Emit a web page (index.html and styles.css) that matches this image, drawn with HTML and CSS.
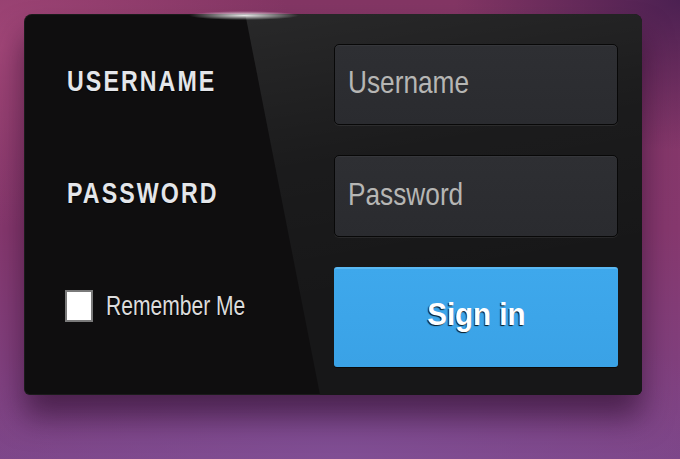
FILE: index.html
```html
<!DOCTYPE html>
<html>
<head>
<meta charset="utf-8">
<link rel="stylesheet" href="styles.css">
</head>
<body>
<div class="scene">
  <form class="panel">
    <label class="label"><span class="squeeze">USERNAME</span></label>
    <div class="field"><span class="ph squeeze">Username</span></div>
    <label class="label"><span class="squeeze">PASSWORD</span></label>
    <div class="field"><span class="ph squeeze">Password</span></div>
    <label class="remember"><span class="box"></span><span class="remember-text squeeze">Remember Me</span></label>
    <button class="signin" type="button"><span class="signin-text">Sign in</span></button>
  </form>
</div>
</body>
</html>
```

FILE: styles.css
```css
html, body {
  margin: 0;
  padding: 0;
}
body {
  width: 680px;
  height: 459px;
  overflow: hidden;
  font-family: "Liberation Sans", Arial, sans-serif;
}
.scene {
  width: 680px;
  height: 459px;
  padding: 14px 0 0 24px;
  box-sizing: border-box;
  background:
    radial-gradient(ellipse 420px 260px at 0% 10%, rgba(165, 72, 122, 0.85), rgba(165, 72, 122, 0) 70%),
    radial-gradient(ellipse 300px 200px at 100% 0%, rgba(70, 30, 80, 0.9), rgba(70, 30, 80, 0) 75%),
    radial-gradient(ellipse 500px 220px at 50% 100%, rgba(128, 78, 148, 1), rgba(128, 78, 148, 0) 80%),
    linear-gradient(180deg, #833664 0%, #86386e 50%, #7d4588 100%);
}
.panel {
  position: relative;
  width: 618px;
  height: 381px;
  box-sizing: border-box;
  margin: 0;
  padding: 30px 24px 28px 43px;
  display: grid;
  grid-template-columns: 1fr 284px;
  grid-template-rows: 81px 82px 100px;
  row-gap: 30px;
  align-items: center;
  background: #0f0e0f;
  border-radius: 8px 8px 6px 6px;
  box-shadow:
    inset 0 0 0 1px rgba(255, 255, 255, 0.05),
    0 22px 30px rgba(40, 10, 40, 0.6);
}
.panel::before {
  content: "";
  position: absolute;
  inset: 0;
  border-radius: inherit;
  clip-path: polygon(35.8% 0, 100% 0, 100% 100%, 47.9% 100%);
  background:
    linear-gradient(170deg, rgba(255, 255, 255, 0.09) 0%, rgba(255, 255, 255, 0.02) 40%, rgba(255, 255, 255, 0) 70%),
    #171718;
}
.panel::after {
  content: "";
  position: absolute;
  left: 165px;
  top: -3px;
  width: 110px;
  height: 9px;
  background: radial-gradient(ellipse 50% 50% at 50% 50%, rgba(255, 255, 255, 0.9), rgba(255, 255, 255, 0) 100%);
}
.label, .field, .remember, .signin {
  position: relative;
  z-index: 1;
}
.squeeze {
  display: inline-block;
  white-space: nowrap;
  transform-origin: left center;
}
.label {
  font-weight: bold;
  font-size: 29px;
  letter-spacing: 2.6px;
  color: #e4e6ea;
  text-shadow: 0 1px 1px rgba(0, 0, 0, 0.9);
  margin-top: -6px;
}
.label .squeeze {
  transform: scaleX(0.8);
}
.field {
  height: 100%;
  box-sizing: border-box;
  display: flex;
  align-items: center;
  padding: 0 0 4px 13px;
  border: 1px solid #080808;
  border-radius: 5px;
  background: linear-gradient(180deg, #2e2f33 0%, #2a2b2f 100%);
  box-shadow: 0 1px 0 rgba(255, 255, 255, 0.07), inset 0 1px 0 rgba(255, 255, 255, 0.04);
}
.ph {
  font-size: 32px;
  color: #b6b6b4;
  transform: scaleX(0.82);
}
.remember {
  display: flex;
  align-items: center;
  gap: 13px;
  padding-bottom: 22px;
  margin-left: -2px;
}
.box {
  width: 24px;
  height: 28px;
  background: #fff;
  border: 2px solid #7a7a7a;
  flex: none;
}
.remember-text {
  font-size: 27px;
  color: #dcdcdc;
  text-shadow: 0 1px 1px rgba(0, 0, 0, 0.9);
  transform: scaleX(0.78);
}
.signin {
  width: 100%;
  height: 100%;
  margin: 0;
  border: none;
  border-top: 2px solid #5ab8f2;
  border-radius: 3px;
  background: linear-gradient(180deg, #3ea8ec 0%, #3aa2e6 100%);
  box-shadow: 0 1px 0 rgba(0, 0, 0, 0.6);
  font-family: inherit;
  font-weight: bold;
  font-size: 32px;
  color: #fff;
  text-shadow: -1px 1px 1px rgba(0, 0, 0, 0.85);
  padding: 0 0 8px 0;
  cursor: pointer;
}
.signin-text {
  display: inline-block;
  transform: scaleX(0.92);
}
```
